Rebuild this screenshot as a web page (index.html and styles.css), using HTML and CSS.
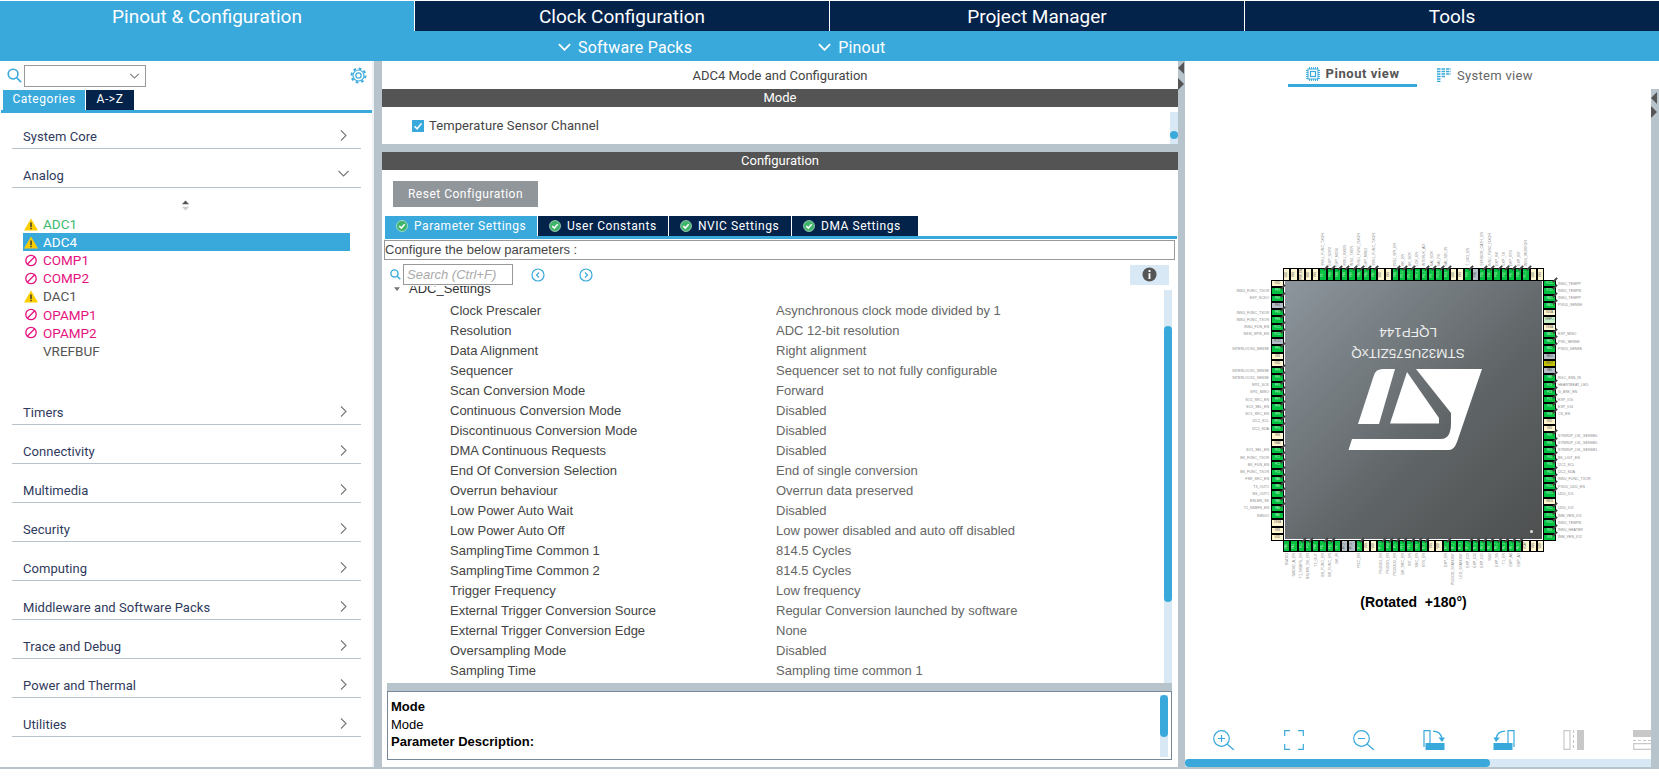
FILE: index.html
```html
<!DOCTYPE html>
<html lang="en">
<head>
<meta charset="utf-8">
<title>STM32CubeMX - ADC4 Mode and Configuration</title>
<link rel="stylesheet" href="styles.css">
</head>
<body>
<header class="topbar">
  <nav class="main-tabs">
    <a class="main-tab active">Pinout &amp; Configuration</a>
    <a class="main-tab">Clock Configuration</a>
    <a class="main-tab">Project Manager</a>
    <a class="main-tab">Tools</a>
  </nav>
  <div class="subbar">
    <span class="sub-item"><svg class="sub-chev" viewBox="0 0 14 8"><path d="M1 1l6 6 6-6"/></svg>Software Packs</span>
    <span class="sub-item"><svg class="sub-chev" viewBox="0 0 14 8"><path d="M1 1l6 6 6-6"/></svg>Pinout</span>
  </div>
</header>
<main class="workspace">
  <aside class="left-panel">
    <div class="left-search">
      <svg class="mag" viewBox="0 0 16 16"><circle cx="6.500" cy="6.500" r="5.200"/><path d="M10.500 10.500l4.500 4.500"/></svg>
      <div class="combo"><svg viewBox="0 0 12 7"><path d="M1 1l5 5 5-5"/></svg></div>
      <svg class="gear" viewBox="0 0 18 18"><circle class="teeth" cx="9" cy="9" r="7.400"/><circle class="ring" cx="9" cy="9" r="5.800"/><circle class="hub" cx="9" cy="9" r="2.800"/></svg>
    </div>
    <div class="left-tabs">
      <span class="ltab active">Categories</span>
      <span class="ltab">A-&gt;Z</span>
    </div>
    <div class="cat-list">
      <div class="cat first">System Core<svg class="chev-r" viewBox="0 0 7 11"><path d="M1 .5l5 5-5 5"/></svg></div>
      <div class="cat">Analog<svg class="chev-d" viewBox="0 0 11 7"><path d="M.5 1l5 5 5-5"/></svg></div>
      <div class="periph-wrap">
        <svg class="sort" viewBox="0 0 10 11"><path class="up" d="M5 0l4 4H1z"/><path class="down" d="M5 11l4-4H1z"/></svg>
        <ul class="periph">
          <li class="ok"><svg class="ic" viewBox="0 0 14 12"><path class="tri" d="M7 0l7 12H0z"/><path class="bang" d="M6.300 4h1.400v4.400H6.300zM6.300 9.300h1.400v1.400H6.300z"/></svg>ADC1</li>
          <li class="sel"><svg class="ic" viewBox="0 0 14 12"><path class="tri" d="M7 0l7 12H0z"/><path class="bang" d="M6.300 4h1.400v4.400H6.300zM6.300 9.300h1.400v1.400H6.300z"/></svg>ADC4</li>
          <li class="off"><svg class="ic" viewBox="0 0 14 14"><circle class="ban" cx="7" cy="7" r="5.600"/><path class="ban" d="M3 11l8-8"/></svg>COMP1</li>
          <li class="off"><svg class="ic" viewBox="0 0 14 14"><circle class="ban" cx="7" cy="7" r="5.600"/><path class="ban" d="M3 11l8-8"/></svg>COMP2</li>
          <li><svg class="ic" viewBox="0 0 14 12"><path class="tri" d="M7 0l7 12H0z"/><path class="bang" d="M6.300 4h1.400v4.400H6.300zM6.300 9.300h1.400v1.400H6.300z"/></svg>DAC1</li>
          <li class="off"><svg class="ic" viewBox="0 0 14 14"><circle class="ban" cx="7" cy="7" r="5.600"/><path class="ban" d="M3 11l8-8"/></svg>OPAMP1</li>
          <li class="off"><svg class="ic" viewBox="0 0 14 14"><circle class="ban" cx="7" cy="7" r="5.600"/><path class="ban" d="M3 11l8-8"/></svg>OPAMP2</li>
          <li><span class="ic"></span>VREFBUF</li>
        </ul>
      </div>
      <div class="cat">Timers<svg class="chev-r" viewBox="0 0 7 11"><path d="M1 .5l5 5-5 5"/></svg></div>
      <div class="cat">Connectivity<svg class="chev-r" viewBox="0 0 7 11"><path d="M1 .5l5 5-5 5"/></svg></div>
      <div class="cat">Multimedia<svg class="chev-r" viewBox="0 0 7 11"><path d="M1 .5l5 5-5 5"/></svg></div>
      <div class="cat">Security<svg class="chev-r" viewBox="0 0 7 11"><path d="M1 .5l5 5-5 5"/></svg></div>
      <div class="cat">Computing<svg class="chev-r" viewBox="0 0 7 11"><path d="M1 .5l5 5-5 5"/></svg></div>
      <div class="cat">Middleware and Software Packs<svg class="chev-r" viewBox="0 0 7 11"><path d="M1 .5l5 5-5 5"/></svg></div>
      <div class="cat">Trace and Debug<svg class="chev-r" viewBox="0 0 7 11"><path d="M1 .5l5 5-5 5"/></svg></div>
      <div class="cat">Power and Thermal<svg class="chev-r" viewBox="0 0 7 11"><path d="M1 .5l5 5-5 5"/></svg></div>
      <div class="cat">Utilities<svg class="chev-r" viewBox="0 0 7 11"><path d="M1 .5l5 5-5 5"/></svg></div>
    </div>
  </aside>
  <div class="splitter first-split"></div>
  <section class="center">
    <h1 class="center-title">ADC4 Mode and Configuration</h1>
    <div class="bar">Mode</div>
    <div class="mode-body">
      <label class="check"><svg viewBox="0 0 12 12"><rect width="12" height="12"/><path d="M2.500 6.200l2.600 2.600 4.400-5.400"/></svg>Temperature Sensor Channel</label>
      <div class="mode-scroll"><span></span></div>
    </div>
    <div class="gap"></div>
    <div class="bar">Configuration</div>
    <div class="config">
      <button class="reset">Reset Configuration</button>
      <div class="ctabs">
        <span class="ctab active w1"><svg viewBox="0 0 12 12"><circle cx="6" cy="6" r="5.500"/><path d="M3.300 6.100l2 2 3.400-3.800"/></svg>Parameter Settings</span>
        <span class="ctab w2"><svg viewBox="0 0 12 12"><circle cx="6" cy="6" r="5.500"/><path d="M3.300 6.100l2 2 3.400-3.800"/></svg>User Constants</span>
        <span class="ctab w3"><svg viewBox="0 0 12 12"><circle cx="6" cy="6" r="5.500"/><path d="M3.300 6.100l2 2 3.400-3.800"/></svg>NVIC Settings</span>
        <span class="ctab w4"><svg viewBox="0 0 12 12"><circle cx="6" cy="6" r="5.500"/><path d="M3.300 6.100l2 2 3.400-3.800"/></svg>DMA Settings</span>
      </div>
      <div class="configure-box">Configure the below parameters :</div>
      <div class="search-row">
        <svg class="mag small" viewBox="0 0 16 16"><circle cx="6.500" cy="6.500" r="5.200"/><path d="M10.500 10.500l4.500 4.500"/></svg>
        <div class="search-input">Search (Ctrl+F)</div>
        <svg class="nav" viewBox="0 0 14 14"><circle cx="7" cy="7" r="6"/><path d="M8 4.500L5.500 7 8 9.500"/></svg>
        <svg class="nav" viewBox="0 0 14 14"><circle cx="7" cy="7" r="6"/><path d="M6 4.500L8.500 7 6 9.500"/></svg>
        <div class="info"><svg viewBox="0 0 16 16"><circle cx="8" cy="8" r="7.500"/><path d="M7 3.200h2v2H7zM7 6.600h2v6.200H7z"/></svg></div>
      </div>
      <div class="tree-wrap">
        <div class="tree">
          <div class="tree-head"><svg viewBox="0 0 8 5"><path d="M0 0h8L4 5z"/></svg>ADC_Settings</div>
          <div class="row"><span>Clock Prescaler</span><span>Asynchronous clock mode divided by 1</span></div>
          <div class="row"><span>Resolution</span><span>ADC 12-bit resolution</span></div>
          <div class="row"><span>Data Alignment</span><span>Right alignment</span></div>
          <div class="row"><span>Sequencer</span><span>Sequencer set to not fully configurable</span></div>
          <div class="row"><span>Scan Conversion Mode</span><span>Forward</span></div>
          <div class="row"><span>Continuous Conversion Mode</span><span>Disabled</span></div>
          <div class="row"><span>Discontinuous Conversion Mode</span><span>Disabled</span></div>
          <div class="row"><span>DMA Continuous Requests</span><span>Disabled</span></div>
          <div class="row"><span>End Of Conversion Selection</span><span>End of single conversion</span></div>
          <div class="row"><span>Overrun behaviour</span><span>Overrun data preserved</span></div>
          <div class="row"><span>Low Power Auto Wait</span><span>Disabled</span></div>
          <div class="row"><span>Low Power Auto Off</span><span>Low power disabled and auto off disabled</span></div>
          <div class="row"><span>SamplingTime Common 1</span><span>814.5 Cycles</span></div>
          <div class="row"><span>SamplingTime Common 2</span><span>814.5 Cycles</span></div>
          <div class="row"><span>Trigger Frequency</span><span>Low frequency</span></div>
          <div class="row"><span>External Trigger Conversion Source</span><span>Regular Conversion launched by software</span></div>
          <div class="row"><span>External Trigger Conversion Edge</span><span>None</span></div>
          <div class="row"><span>Oversampling Mode</span><span>Disabled</span></div>
          <div class="row"><span>Sampling Time</span><span>Sampling time common 1</span></div>
        </div>
        <div class="tree-scroll"><span></span></div>
      </div>
      <div class="band"></div>
      <div class="detail">
        <div class="detail-text">
          <strong>Mode</strong>
          <div>Mode</div>
          <strong>Parameter Description:</strong>
        </div>
        <div class="detail-scroll"><span></span></div>
      </div>
    </div>
  </section>
  <div class="splitter mid-split"><i class="tri-l"></i><i class="tri-r"></i></div>
  <section class="right-panel">
    <div class="view-tabs">
      <span class="vtab active">
        <svg viewBox="0 0 14 14"><path d="M3.500 0v2M5.500 0v2M7.500 0v2M9.500 0v2M11.500 0v2M3.500 12v2M5.500 12v2M7.500 12v2M9.500 12v2M11.500 12v2M0 3.500h2M0 5.500h2M0 7.500h2M0 9.500h2M0 11.500h2M12 3.500h2M12 5.500h2M12 7.500h2M12 9.500h2M12 11.500h2"/><rect x="2" y="2" width="10" height="10"/><rect class="inner" x="4.500" y="4.500" width="5" height="5"/></svg>
        Pinout view</span>
      <span class="vtab">
        <svg viewBox="0 0 14 14"><path d="M0 1h14M0 3.500h14M0 6h14M0 8.500h8M0 11h4M0 13.500h4" class="dash"/></svg>
        System view</span>
    </div>
    <div class="stage">
      <div class="chip">
        <div class="chip-body">
          <div class="chip-text"><div>STM32U575ZITxQ</div><div>LQFP144</div></div>
          <svg class="st-logo" viewBox="0 0 150 100"><path d="M19 64L35 15Q37 9 44 9H56L40 64Z"/><path d="M51 63.500L68 12 100 58V63.500Z"/><path d="M77 9H143L118 82Q115 90 110 90H9.500L13 79H102Q112 79 112 63V53Z"/></svg>
          <span class="dot"></span>
        </div>
        <div class="strip top">
          <span class="pin c"><em>VDD</em></span><span class="pin c"><em>VSS</em></span><span class="pin c"><em>PDR_ON</em></span><span class="pin c"><em>VDD</em></span><span class="pin c"><em>VSS</em></span>
          <span class="pin g"><em>PE1</em><small>INSU_FUNC_TXOR</small></span><span class="pin g"><em>PE0</em><small>EXP_SCK0</small></span><span class="pin g"><em>PB9</em><small>EXP_MOSI</small></span><span class="pin g"><em>PB8</em><small>INSU_RXEN</small></span><span class="pin g"><em>PB7</em><small>INSU_TXEN</small></span><span class="pin g"><em>PB6</em><small>INSU_FUNC_RXOR</small></span><span class="pin g"><em>PB5</em><small>EXP_MISO</small></span><span class="pin g"><em>PB4</em><small>INSU_FUNC_TXOR</small></span>
          <span class="pin c"><em>VDD</em></span><span class="pin c"><em>VSS</em></span>
          <span class="pin g"><em>PB3</em><small>INSU_SPI_EN</small></span><span class="pin g"><em>PG15</em><small>BK_EN</small></span><span class="pin g"><em>PG14</em><small>BK_SCK</small></span><span class="pin n"><em>PG13</em><small>LCK_EN</small></span><span class="pin g"><em>PG12</em><small>INTERLK_AD</small></span><span class="pin g"><em>PG11</em><small>SAI_SCK</small></span><span class="pin g"><em>PG10</em><small>SAI_FS</small></span><span class="pin g"><em>PG9</em><small>SAI_SDI_IN</small></span>
          <span class="pin c"><em>VDD</em></span><span class="pin c"><em>VSS</em></span>
          <span class="pin g"><em>PD7</em><small>T_DIO_EN</small></span><span class="pin s"><em>PD6</em></span>
          <span class="pin g"><em>PD5</em><small>SENSOR_CATH_EN</small></span><span class="pin g"><em>PD4</em><small>INSU_FUNC_RXOR</small></span><span class="pin g"><em>PD3</em><small>EXP_RX</small></span><span class="pin g"><em>PD2</em><small>EXP_TX</small></span><span class="pin g"><em>PD1</em><small>EXP_RTS</small></span><span class="pin g"><em>PD0</em><small>EXP_INT</small></span><span class="pin g"><em>PC12</em><small>INSU_MOSFOR</small></span>
          <span class="pin c"><em>VDD</em></span><span class="pin c"><em>VSS</em></span>
        </div>
        <div class="strip left">
          <span class="pin c"><em>VDD</em></span>
          <span class="pin g"><em>PE2</em><small>INSU_FUNC_TXOR</small></span><span class="pin g"><em>PE3</em><small>EXP_SCKO</small></span><span class="pin s"><em>PE4</em></span>
          <span class="pin g"><em>PE5</em><small>INSU_FUNC_TXOR</small></span><span class="pin g"><em>PE6</em><small>INSU_FUNC_TXOR</small></span><span class="pin g"><em>PC13</em><small>INSU_FUN_EN</small></span><span class="pin g"><em>PC14</em><small>NSSI_SPIS_EN</small></span><span class="pin s"><em>PC15</em></span>
          <span class="pin g"><em>PF0</em><small>INTERLOCK0_SENSE</small></span>
          <span class="pin c"><em>VSS</em></span><span class="pin c"><em>VDD</em></span>
          <span class="pin g"><em>PF3</em><small>INTERLOCK1_SENSE</small></span><span class="pin g"><em>PF4</em><small>INTERLOCK1_SENSE</small></span><span class="pin g"><em>PF5</em><small>SPI1_SCK</small></span><span class="pin g"><em>PF6</em><small>SPI1_MISO</small></span><span class="pin g"><em>PF7</em><small>SO2_SRC_EN</small></span><span class="pin g"><em>PF8</em><small>SO2_SEL_EN</small></span><span class="pin g"><em>PF9</em><small>SO1_SRC_EN</small></span><span class="pin g"><em>PF10</em><small>I2C2_SCL</small></span><span class="pin g"><em>PF11</em><small>I2C2_SDA</small></span>
          <span class="pin c"><em>VSS</em></span><span class="pin c"><em>VBAT</em></span>
          <span class="pin g"><em>PC0</em><small>SO1_SEL_EN</small></span><span class="pin g"><em>PC1</em><small>BK_FUNC_TXOR</small></span><span class="pin g"><em>PC2</em><small>BK_FUN_EN</small></span><span class="pin g"><em>PC3</em><small>BK_FUNC_TXOR</small></span><span class="pin g"><em>PA0</em><small>FSR_SRC_EN</small></span><span class="pin g"><em>PA1</em><small>T3_OUT1</small></span><span class="pin g"><em>PA2</em><small>BS_OUT1</small></span><span class="pin g"><em>PA3</em><small>BSLMS_SS</small></span><span class="pin g"><em>PA4</em><small>T1_NSBFS_EN</small></span><span class="pin n"><em>PA5</em><small>SWDIO</small></span>
          <span class="pin c"><em>VSSA</em></span><span class="pin c"><em>VSS</em></span><span class="pin c"><em>VDD</em></span>
        </div>
        <div class="strip bottom">
          <span class="pin n"><em>PA6</em><small>SWDIO</small></span><span class="pin n"><em>PA7</em><small>SWDIO_A_EN</small></span><span class="pin g"><em>PC4</em><small>T1_NSBFS_EN</small></span><span class="pin g"><em>PC5</em><small>BSLMS_SS_EN</small></span><span class="pin n"><em>PB0</em><small>T3_OUT</small></span><span class="pin g"><em>PB1</em><small>BS_FUNC_EN</small></span><span class="pin g"><em>PB2</em><small>BK_FUNC_EN</small></span><span class="pin n"><em>PF11</em><small>BK_IN</small></span>
          <span class="pin s"><em>PF12</em></span><span class="pin s"><em>PF13</em></span><span class="pin g"><em>PF14</em><small>PGC_EN</small></span>
          <span class="pin c"><em>VSS</em></span><span class="pin c"><em>VDD</em></span>
          <span class="pin g"><em>PF15</em><small>PGOOD_EN</small></span><span class="pin g"><em>PG0</em><small>PGOOD_EN</small></span><span class="pin g"><em>PG1</em><small>PGOOD2_EN</small></span><span class="pin g"><em>PE7</em><small>BK_SRC_EN</small></span><span class="pin g"><em>PE8</em><small>INT_EN</small></span><span class="pin g"><em>PE9</em><small>SRC_EN</small></span><span class="pin g"><em>PE10</em><small>SYS_EN</small></span>
          <span class="pin c"><em>VSS</em></span><span class="pin c"><em>VDD</em></span>
          <span class="pin g"><em>PE11</em><small>EXP_EN</small></span><span class="pin n"><em>PE12</em><small>PGOOD_STANDBY</small></span><span class="pin n"><em>PE13</em><small>LED_STANDBY</small></span><span class="pin g"><em>PE14</em><small>EXP_IO3</small></span><span class="pin g"><em>PE15</em><small>EXP_IO2</small></span><span class="pin g"><em>PB10</em><small>EXP_IO1</small></span><span class="pin g"><em>PB11</em><small>SW2</small></span><span class="pin g"><em>PB12</em><small>EXP_SS</small></span><span class="pin g"><em>PB13</em><small>T1_EN</small></span><span class="pin g"><em>PB14</em><small>EXP_A0</small></span><span class="pin g"><em>PB15</em><small>EXP_A1</small></span>
          <span class="pin c"><em>VCAP</em></span><span class="pin c"><em>VSS</em></span><span class="pin c"><em>VDD</em></span>
        </div>
        <div class="strip right">
          <span class="pin g"><em>PC11</em><small>INSU_TEMPP</small></span><span class="pin g"><em>PC10</em><small>INSU_TEMPN</small></span><span class="pin g"><em>PA15</em><small>INSU_TEMPP</small></span><span class="pin g"><em>PA14</em><small>PVDD_SENSE</small></span>
          <span class="pin c"><em>VDDA</em></span><span class="pin l"><em>VREF+</em></span><span class="pin c"><em>VSSA</em></span>
          <span class="pin g"><em>PA13</em><small>EXP_MISO</small></span><span class="pin g"><em>PA12</em><small>PVD_SENSE</small></span><span class="pin g"><em>PA11</em><small>PVDD_SENSE</small></span>
          <span class="pin s"><em>PA10</em></span><span class="pin y"><em>NRST</em></span><span class="pin s"><em>PA9</em></span>
          <span class="pin g"><em>PA8</em><small>RGC_SNS_IN</small></span><span class="pin g"><em>PC9</em><small>HEARTBEAT_LED</small></span><span class="pin g"><em>PC8</em><small>G_BRK_EN</small></span><span class="pin g"><em>PC7</em><small>EXP_IO0</small></span><span class="pin g"><em>PC6</em><small>EXP_IO4</small></span><span class="pin g"><em>PG8</em><small>CS_EN</small></span>
          <span class="pin c"><em>VDD</em></span><span class="pin c"><em>VSS</em></span>
          <span class="pin g"><em>PG7</em><small>SYNRUP_LVL_SENSE0</small></span><span class="pin g"><em>PG6</em><small>SYNRUP_LVL_SENSE0</small></span><span class="pin g"><em>PG5</em><small>SYNRUP_LVL_SENSE1</small></span><span class="pin g"><em>PG4</em><small>BK_LIGT_EN</small></span><span class="pin g"><em>PG3</em><small>I2C2_SCL</small></span><span class="pin g"><em>PG2</em><small>I2C2_SDA</small></span><span class="pin g"><em>PD15</em><small>INSU_FUNC_TXOR</small></span><span class="pin g"><em>PD14</em><small>PVDD_UDD_EN</small></span><span class="pin g"><em>PD13</em><small>UDD_IO1</small></span>
          <span class="pin c"><em>VBUS</em></span>
          <span class="pin g"><em>PD12</em><small>UDD_IO2</small></span><span class="pin g"><em>PD11</em><small>INM_VEN_IO1</small></span><span class="pin g"><em>PD10</em><small>INSU_TEMPN</small></span><span class="pin g"><em>PD9</em><small>INSU_HEATER</small></span><span class="pin g"><em>PD8</em><small>INM_VEN_IO2</small></span>
        </div>
      </div>
      <div class="caption">(Rotated&nbsp; +180°)</div>
    </div>
    <div class="toolbar">
      <span class="tool"><svg viewBox="0 0 22 20"><circle cx="8.500" cy="8.500" r="7.800"/><path d="M14 14l7 6M5 8.500h7M8.500 5v7"/></svg></span>
      <span class="tool"><svg viewBox="0 0 22 20"><path d="M7 .7H1.700V6M15 .7h5.300V6M1.700 14v5.300H7M20.300 14v5.300H15"/></svg></span>
      <span class="tool"><svg viewBox="0 0 22 20"><circle cx="8.500" cy="8.500" r="7.800"/><path d="M14 14l7 6M5 8.500h7"/></svg></span>
      <span class="tool"><svg viewBox="0 0 22 20"><path d="M1 17V.7h6V13M10 1.200c5 0 8 3 9 7"/><path class="fill" d="M2.500 13H21.500V20H2.500zM15.500 7.500h6.500L19 12z"/></svg></span>
      <span class="tool"><svg viewBox="0 0 22 20"><path d="M21 17V.7h-6V13M12 1.200c-5 0-8 3-9 7"/><path class="fill" d="M.5 13H19.500V20H.5zM.5 7.500h6.500L3 12z"/></svg></span>
      <span class="tool muted"><svg viewBox="0 0 22 20"><path d="M1 .7h6v18.600H1z"/><path d="M10.500 0v20" class="dashy"/><path class="fill" d="M14 0h7v20h-7z"/></svg></span>
      <span class="tool muted"><svg viewBox="0 0 22 20"><path class="fill" d="M0 0h22v7H0z"/><path d="M0 10.500h22" class="dashy"/><path d="M.7 13.700h21v5.600H.7z"/></svg></span>
    </div>
    <div class="hscroll"><span></span></div>
  </section>
  <div class="splitter end-split"><i class="tri-l"></i><i class="tri-r"></i></div>
</main>
<div class="foot-line"></div>
</body>
</html>
```

FILE: styles.css
```css
* { box-sizing: border-box; }
html, body { margin: 0; padding: 0; }
body {
  width: 1659px;
  height: 776px;
  overflow: hidden;
  background: #fff;
  font-family: Roboto, "Liberation Sans", sans-serif;
  color: #444;
}

/* header */
.topbar { padding-top: 1px; background: #fff; }
.main-tabs { display: flex; height: 30px; background: #fff; gap: 1px; }
.main-tab {
  flex: 1;
  background: #03234b;
  color: #fff;
  font-size: 19px;
  line-height: 32px;
  text-align: center;
}
.main-tab.active { background: #39a9dc; }
.subbar {
  display: flex;
  height: 30px;
  background: #39a9dc;
  padding: 2px 0 0 558px;
  gap: 126px;
  align-items: center;
  color: #fff;
  font-size: 16px;
}
.sub-item { display: flex; align-items: center; gap: 7px; letter-spacing: .2px; }
.sub-chev { width: 13px; height: 8px; fill: none; stroke: #fff; stroke-width: 2; }

/* workspace */
.workspace { display: flex; height: 706px; }
.splitter { width: 7px; background: #b8c4cc; flex: none; }
.first-split { width: 8px; }
.mid-split { display: flex; flex-direction: column; gap: 4px; padding-top: 1px; }
.end-split { width: 8px; margin-top: 28px; display: flex; flex-direction: column; gap: 2px; padding-top: 3px; }
.tri-l, .tri-r { display: block; width: 0; height: 0; border-style: solid; }
.tri-l { border-width: 6px 6px 6px 0; border-color: transparent #555 transparent transparent; }
.tri-r { border-width: 6px 0 6px 6px; border-color: transparent transparent transparent #555; }

/* left panel */
.left-panel {
  width: 374px;
  flex: none;
  display: flex;
  flex-direction: column;
  background: #fff;
  border-right: 2px solid #eef2f5;
}
.left-search { display: flex; align-items: center; height: 29px; padding: 0 5px 0 7px; }
.mag { fill: none; stroke: #39a9dc; stroke-width: 1.700; width: 15px; height: 15px; flex: none; }
.combo {
  width: 122px;
  height: 22px;
  margin-left: 2px;
  border: 1px solid #999;
  display: flex;
  align-items: center;
  justify-content: flex-end;
  padding-right: 5px;
}
.combo svg { width: 11px; height: 6px; fill: none; stroke: #777; stroke-width: 1.200; }
.gear { width: 17px; height: 17px; margin-left: auto; fill: none; stroke: #39a9dc; }
.gear .teeth { stroke-width: 2; stroke-dasharray: 2.900 2.900; }
.gear .ring { stroke-width: 1.200; }
.gear .hub { stroke-width: 1.300; }
.left-tabs { display: flex; gap: 1px; height: 20px; padding-left: 3px; }
.ltab {
  background: #03234b;
  color: #fff;
  width: 48px;
  font-size: 12px;
  line-height: 19px;
  text-align: center;
  letter-spacing: .55px;
}
.ltab.active { background: #39a9dc; width: 82px; }
.cat-list { border-top: 3px solid #39a9dc; margin-left: 1px; }
.cat {
  height: 39px;
  margin: 0 11px;
  border-bottom: 1px solid #b8c4cc;
  display: flex;
  align-items: flex-end;
  padding: 0 10px 3px 11px;
  font-size: 13px;
  line-height: 16px;
  color: #2f3a5c;
  letter-spacing: .05px;
}
.cat.first { height: 36px; }
.chev-r, .chev-d { margin-left: auto; fill: none; stroke: #777; stroke-width: 1.100; flex: none; }
.chev-r { width: 7px; height: 11px; margin-bottom: 4px; margin-right: 4px; }
.chev-d { width: 11px; height: 7px; margin-bottom: 7px; margin-right: 2px; }
.periph-wrap { height: 198px; padding: 12px 0 0 22px; }
.sort { display: block; width: 9px; height: 11px; margin-left: 158px; }
.sort .up { fill: #555; }
.sort .down { fill: #ccc; }
.periph { list-style: none; margin: 4px 0 0; padding: 0; width: 327px; }
.periph li {
  display: flex;
  align-items: center;
  height: 18.120px;
  padding-left: 1px;
  font-size: 13.500px;
  color: #555;
  gap: 5px;
}
.periph .ic { width: 14px; height: 13px; flex: none; }
.periph .tri { fill: #fcce00; }
.periph .bang { fill: #333; }
.periph .ban { fill: none; stroke: #e5137f; stroke-width: 1.400; }
.periph .ok { color: #3dba6f; }
.periph .sel { background: #39a9dc; color: #fff; }
.periph .off { color: #e5137f; }

/* centre */
.center { width: 796px; flex: none; display: flex; flex-direction: column; background: #fff; }
.center-title {
  margin: 0;
  height: 28px;
  font-size: 13px;
  font-weight: 400;
  line-height: 29px;
  text-align: center;
  color: #444;
}
.bar {
  height: 18px;
  background: #545454;
  color: #fff;
  font-size: 13px;
  line-height: 18px;
  text-align: center;
}
.mode-body { height: 37px; display: flex; padding-left: 30px; }
.check { display: flex; align-items: center; gap: 5px; font-size: 13px; color: #444; letter-spacing: .1px; }
.check svg { width: 12px; height: 12px; }
.check rect { fill: #39a9dc; }
.check path { fill: none; stroke: #fff; stroke-width: 1.500; }
.mode-scroll { width: 8px; margin: 5px 0 0 auto; background: #d9e8f5; display: flex; align-items: flex-end; padding-bottom: 5px; }
.mode-scroll span { width: 8px; height: 8px; border-radius: 50%; background: #39a9dc; }
.gap { height: 8px; background: #b8c4cc; }
.config { flex: 1; display: flex; flex-direction: column; min-height: 0; }
.reset {
  width: 145px;
  height: 26px;
  margin: 11px 0 0 11px;
  border: 0;
  background: #91969b;
  color: #fff;
  font: 12px Roboto, sans-serif;
  letter-spacing: .5px;
}
.ctabs { display: flex; gap: 1px; margin: 9px 1px 0 3px; border-bottom: 3px solid #39a9dc; }
.ctab {
  display: flex;
  align-items: center;
  gap: 6px;
  height: 20px;
  padding-left: 11px;
  background: #03234b;
  color: #fff;
  font-size: 12px;
  letter-spacing: .55px;
}
.ctab.active { background: #39a9dc; }
.ctab svg { width: 12px; height: 12px; flex: none; }
.ctab circle { fill: #3fb56c; stroke: #dff3e6; stroke-width: .6; }
.ctab path { fill: none; stroke: #fff; stroke-width: 1.500; }
.w1 { width: 152px; }
.w2 { width: 130px; }
.w3 { width: 122px; }
.w4 { width: 126px; }
.configure-box {
  height: 20px;
  margin: 1px 3px 0 2px;
  border: 1px solid #999;
  font: 13px/17px "Liberation Sans", sans-serif;
  color: #444;
}
.search-row { display: flex; align-items: center; height: 21px; margin-top: 4px; padding-left: 8px; }
.mag.small { width: 11px; height: 11px; stroke-width: 2; }
.search-input {
  width: 110px;
  height: 21px;
  margin-left: 2px;
  border: 1px solid #999;
  padding-left: 3px;
  font: italic 13px/19px "Liberation Sans", sans-serif;
  color: #aaa;
}
.nav { width: 14px; height: 14px; fill: none; stroke: #39a9dc; stroke-width: 1.200; margin-left: 18px; }
.nav + .nav { margin-left: 34px; }
.info { width: 39px; height: 20px; margin-left: auto; margin-right: 9px; background: #d9e8f5; display: flex; align-items: center; justify-content: center; }
.info svg { width: 15px; height: 15px; }
.info circle { fill: #555; }
.info path { fill: #fff; }
.tree-wrap { display: flex; height: 397px; margin-top: 1px; overflow: hidden; }
.tree {
  flex: 1;
  margin-top: -7px;
  font: 13px/20px "Liberation Sans", sans-serif;
  color: #555;
}
.tree-head { display: flex; align-items: flex-start; height: 22px; padding-left: 12px; color: #333; }
.tree-head svg { width: 6px; height: 4px; margin: 8px 9px 0 0; fill: #777; }
.row { display: grid; grid-template-columns: 326px 1fr; height: 20px; padding-left: 68px; }
.row span:first-child { color: #444; }
.row span:last-child { color: #666; }
.tree-scroll { width: 8px; margin: 4px 6px 0 0; background: #d9e8f5; padding-top: 36px; flex: none; }
.tree-scroll span { display: block; height: 276px; background: #39a9dc; border-radius: 4px; }
.band { height: 8px; margin: 0 6px 0 5px; background: #b8c4cc; }
.detail {
  height: 69px;
  margin: 0 6px 0 5px;
  border: 1px solid #778899;
  display: flex;
  font: 13px/17.500px "Liberation Sans", sans-serif;
  color: #000;
}
.detail-text { flex: 1; padding: 6px 0 0 3px; }
.detail-text strong { display: block; }
.detail-scroll { width: 8px; margin: 3px 3px 2px 0; background: #d9e8f5; }
.detail-scroll span { display: block; height: 42px; background: #39a9dc; border-radius: 4px; }

/* right */
.right-panel { width: 466px; flex: none; display: flex; flex-direction: column; background: #fff; }
.view-tabs { display: flex; height: 26px; padding-left: 103px; gap: 20px; flex: none; }
.vtab {
  display: flex;
  align-items: center;
  gap: 6px;
  font-size: 13px;
  letter-spacing: .3px;
  color: #666;
  padding: 5px 0 3px;
  height: 26px;
}
.vtab.active {
  width: 129px;
  justify-content: center;
  font-weight: 700;
  color: #555;
  letter-spacing: .55px;
  border-bottom: 3px solid #39a9dc;
}
.vtab svg { width: 14px; height: 14px; fill: none; stroke: #39a9dc; stroke-width: .9; }
.vtab svg rect { fill: #fff; stroke-width: 1; }
.vtab svg .inner { fill: #fff; stroke-width: 1.200; }
.vtab svg .dash { stroke-width: 1.300; stroke-dasharray: 3.500 1; }
.stage { flex: 1; min-height: 0; padding: 181px 0 0 86px; }
.chip { position: relative; width: 285px; height: 284px; }
.chip-body {
  position: absolute;
  left: 14px;
  top: 13px;
  width: 257px;
  height: 258px;
  background: linear-gradient(135deg, #8d969d 0%, #5f6466 60%, #4e5050 100%);
}
.chip-text {
  position: absolute;
  left: 23px;
  top: 41px;
  width: 200px;
  text-align: center;
  transform: rotate(180deg);
  font: 13.500px/21px "Liberation Sans", sans-serif;
  color: #eee;
}
.st-logo { position: absolute; left: 54px; top: 79px; width: 150px; height: 100px; fill: #fff; }
.dot { position: absolute; right: 9px; bottom: 6px; width: 3px; height: 3px; background: #ddd; border-radius: 50%; }
.strip { position: absolute; display: flex; gap: 2px; padding: 1px; background: #000; }
.strip.top { left: 12px; top: 0; width: 261px; height: 13px; }
.strip.bottom { left: 12px; top: 272px; width: 261px; height: 12px; }
.strip.left { left: 0; top: 12px; width: 13px; height: 261px; flex-direction: column; }
.strip.right { left: 272px; top: 12px; width: 13px; height: 261px; flex-direction: column; }
.pin {
  position: relative;
  flex: 1;
  min-width: 0;
  min-height: 0;
  display: flex;
  align-items: center;
  justify-content: center;
  background: #fff6cf;
}
.pin.g, .pin.n { background: #00c040; }
.pin.s { background: #b4bec6; }
.pin.y { background: #c4c400; }
.pin.l { background: #c8f0c8; }
.pin.g::after {
  content: "";
  position: absolute;
  right: -3px;
  top: -2px;
  width: 6px;
  height: 2px;
  background: #444;
  transform: rotate(-45deg);
}
.pin em {
  font: normal 2.600px/3px "Liberation Sans", sans-serif;
  color: #555;
  white-space: nowrap;
}
.pin.g em, .pin.n em { color: #c9f3d6; }
.top .pin em, .bottom .pin em { writing-mode: vertical-rl; transform: rotate(180deg); }
.pin small {
  position: absolute;
  font: 3.600px/4px "Liberation Sans", sans-serif;
  color: #888;
  white-space: nowrap;
}
.left .pin small { right: calc(100% + 3px); top: 50%; transform: translateY(-50%); }
.right .pin small { left: calc(100% + 3px); top: 50%; transform: translateY(-50%); }
.top .pin small { bottom: calc(100% + 3px); left: 50%; writing-mode: vertical-rl; transform: translateX(-50%) rotate(180deg); }
.bottom .pin small { top: calc(100% + 2px); left: 50%; writing-mode: vertical-rl; transform: translateX(-50%) rotate(180deg); }
.caption {
  width: 285px;
  margin-top: 40px;
  text-align: center;
  font: 700 14px/20px "Liberation Sans", sans-serif;
  color: #000;
}
.toolbar { display: flex; height: 20px; margin-bottom: 9px; padding-left: 28px; overflow: hidden; flex: none; }
.tool { width: 70px; flex: none; }
.tool svg { display: block; width: 22px; height: 20px; fill: none; stroke: #39a9dc; stroke-width: 1.200; }
.tool .fill { fill: #39a9dc; stroke: none; }
.tool.muted svg { stroke: #c8c8c8; }
.tool.muted .fill { fill: #c8c8c8; }
.tool .dashy { stroke-dasharray: 3 2; }
.hscroll { height: 8px; background: #d9e8f5; flex: none; }
.hscroll span { display: block; width: 305px; height: 8px; background: #39a9dc; border-radius: 4px; }
.foot-line { height: 2px; background: #b8c4cc; }
```
